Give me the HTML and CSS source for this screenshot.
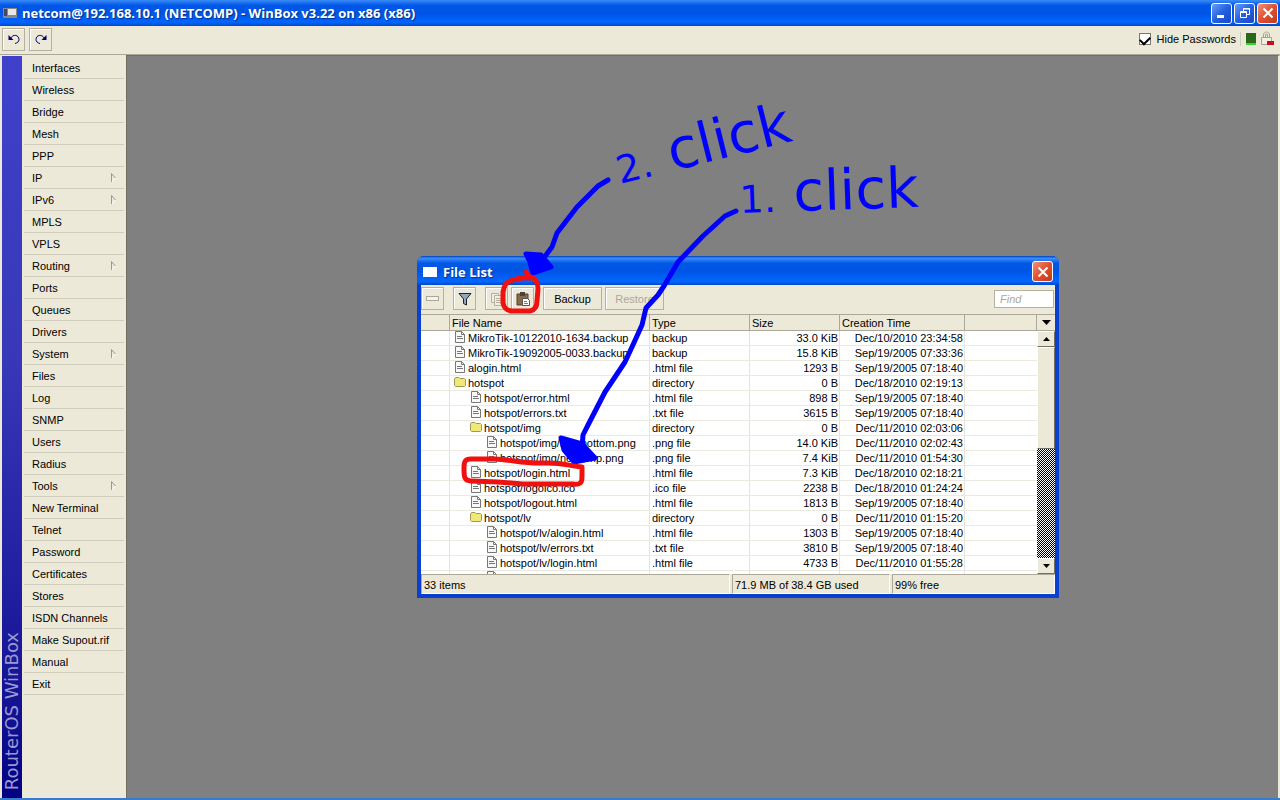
FILE: index.html
```html
<!DOCTYPE html>
<html lang="en">

<head>
    <meta charset="utf-8">
    <title>netcom@192.168.10.1 (NETCOMP) - WinBox v3.22 on x86 (x86)</title>
    <link rel="stylesheet" href="styles.css">
</head>

<body>
    <!-- shared icons -->
    <svg class="defs" width="0" height="0">
        <symbol id="file" viewBox="0 0 12 12">
            <path d="M1.5 .5h6l3 3v8h-9z" fill="#f8f8f8" stroke="#777" />
            <path d="M7.500 .5v3h3" fill="none" stroke="#777" />
            <path d="M3 5.500h5M3 7.500h6" stroke="#777" />
        </symbol>
        <symbol id="folder" viewBox="0 0 12 12">
            <path d="M.5 3l1-1.500h3.500l1 1h4.500l1 1v6l-1 1h-9l-1-1z" fill="#f0e878" stroke="#a09a50" />
        </symbol>
        <symbol id="cross" viewBox="0 0 12 12">
            <path d="M1.500 1.500l9 9M10.500 1.500l-9 9" stroke="#fff" stroke-width="2" />
        </symbol>
        <symbol id="sub" viewBox="0 0 8 10">
            <path d="M1.500 9.500v-9" stroke="#999" fill="none" />
            <path d="M1.500 .5l4 4.500" stroke="#999" fill="none" />
            <path d="M5.500 5l-4 4.500" stroke="#fff" fill="none" />
        </symbol>
    </svg>

    <header class="titlebar">
        <svg width="14" height="10" viewBox="0 0 14 10">
            <rect width="14" height="10" fill="#888" />
            <rect x="1" y="1" width="3" height="7" fill="#446" />
            <rect x="5" y="1" width="8" height="6" fill="#e8e8e8" />
        </svg>
        <h1>netcom@192.168.10.1 (NETCOMP) - WinBox v3.22 on x86 (x86)</h1>
        <button class="win-btn" aria-label="Minimize"><svg width="12" height="12"><rect x="1" y="8" width="7" height="3" fill="#fff" /></svg></button>
        <button class="win-btn" aria-label="Restore"><svg width="12" height="12" fill="none" stroke="#fff"><path d="M4.500 4V1.500h6v6H8M4 2h7" /><path d="M1.500 4.500h6v6h-6zM1 5.500h7" /></svg></button>
        <button class="win-btn close" aria-label="Close"><svg width="12" height="12"><use href="#cross" /></svg></button>
    </header>

    <div class="toolbar">
        <button class="tool" aria-label="Undo"><svg width="12" height="10" fill="none" stroke="#000070"><path d="M2.500 4.500C5-.5 11 1 11 5.500c0 2-1.500 3.500-4 4" /><path d="M.5 1v5h5z" fill="#000070" stroke="none" /></svg></button>
        <button class="tool" aria-label="Redo"><svg width="12" height="10" fill="none" stroke="#000070"><path d="M9.500 4.500C7-.5 1 1 1 5.500c0 2 1.500 3.500 4 4" /><path d="M11.500 1v5h-5z" fill="#000070" stroke="none" /></svg></button>
        <label class="hide-pass"><input type="checkbox" checked> Hide Passwords</label>
        <span class="load"></span>
        <svg width="14" height="16" viewBox="0 0 14 16" fill="none" stroke="#aaa093">
            <path d="M3.500 7V4C3.500 0 9.500 0 9.500 4v3" />
            <path d="M5.500 7V4c0-1.500 2-1.500 2 0v3" />
            <path d="M1.500 6.500h10v7h-10z" fill="#f2efe2" />
            <rect x="7" y="10" width="7" height="4" fill="#c8101c" stroke="none" />
        </svg>
    </div>

    <main>
        <div class="brand"><span>RouterOS WinBox</span></div>
        <nav>
            <a href="#">Interfaces</a>
            <a href="#">Wireless</a>
            <a href="#">Bridge</a>
            <a href="#">Mesh</a>
            <a href="#">PPP</a>
            <a href="#">IP <svg><use href="#sub" /></svg></a>
            <a href="#">IPv6 <svg><use href="#sub" /></svg></a>
            <a href="#">MPLS</a>
            <a href="#">VPLS</a>
            <a href="#">Routing <svg><use href="#sub" /></svg></a>
            <a href="#">Ports</a>
            <a href="#">Queues</a>
            <a href="#">Drivers</a>
            <a href="#">System <svg><use href="#sub" /></svg></a>
            <a href="#">Files</a>
            <a href="#">Log</a>
            <a href="#">SNMP</a>
            <a href="#">Users</a>
            <a href="#">Radius</a>
            <a href="#">Tools <svg><use href="#sub" /></svg></a>
            <a href="#">New Terminal</a>
            <a href="#">Telnet</a>
            <a href="#">Password</a>
            <a href="#">Certificates</a>
            <a href="#">Stores</a>
            <a href="#">ISDN Channels</a>
            <a href="#">Make Supout.rif</a>
            <a href="#">Manual</a>
            <a href="#">Exit</a>
        </nav>

        <div class="desktop">
            <section class="window">
                <div class="window-title">
                    <span class="window-icon"></span>
                    <h2>File List</h2>
                    <button class="win-btn close" aria-label="Close"><svg width="12" height="12"><use href="#cross" /></svg></button>
                </div>
                <div class="window-tools">
                    <button class="tool" aria-label="Remove" disabled><svg width="13" height="5"><rect x=".5" y=".5" width="12" height="4" fill="#f6f4ea" stroke="#aca899" /></svg></button>
                    <button class="tool" aria-label="Filter"><svg width="14" height="14"><path d="M1 1.500h12L8.500 7v6l-3-1.500V7z" fill="#8fa6bd" stroke="#222" /></svg></button>
                    <div class="pair">
                        <button class="tool" aria-label="Copy" disabled><svg width="14" height="14" fill="#f0eee2" stroke="#b5b1a2"><path d="M1.500 1.500h7v9h-7z" /><path d="M4.500 3.500h8v10h-8zM6 6.500h5M6 8.500h5M6 10.500h5" /></svg></button>
                        <button class="tool" aria-label="Paste"><svg width="14" height="14"><path d="M1 2h11v11H1z" fill="#8a6a48" stroke="#54402c" /><rect x="4" y="0" width="5" height="4" fill="#4c4238" /><path d="M6.500 6.500h5l2 2v5h-7z" fill="#fff" stroke="#555" /><path d="M8 9.500h3M8 11.500h4" stroke="#777" /></svg></button>
                    </div>
                    <div class="pair">
                        <button class="text-btn">Backup</button>
                        <button class="text-btn" disabled>Restore</button>
                    </div>
                    <input class="find" type="text" placeholder="Find" aria-label="Find">
                </div>

                <div class="list">
                    <div class="rows">
                        <table>
                            <colgroup>
                                <col class="c-mark">
                                <col class="c-name">
                                <col class="c-type">
                                <col class="c-size">
                                <col class="c-time">
                                <col>
                            </colgroup>
                            <thead>
                                <tr><th></th><th>File Name</th><th>Type</th><th>Size</th><th>Creation Time</th><th></th></tr>
                            </thead>
                            <tbody>
                                <tr><td></td><td><svg><use href="#file" /></svg>MikroTik-10122010-1634.backup</td><td>backup</td><td>33.0 KiB</td><td>Dec/10/2010 23:34:58</td><td></td></tr>
                                <tr><td></td><td><svg><use href="#file" /></svg>MikroTik-19092005-0033.backup</td><td>backup</td><td>15.8 KiB</td><td>Sep/19/2005 07:33:36</td><td></td></tr>
                                <tr><td></td><td><svg><use href="#file" /></svg>alogin.html</td><td>.html file</td><td>1293 B</td><td>Sep/19/2005 07:18:40</td><td></td></tr>
                                <tr><td></td><td><svg><use href="#folder" /></svg>hotspot</td><td>directory</td><td>0 B</td><td>Dec/18/2010 02:19:13</td><td></td></tr>
                                <tr class="in1"><td></td><td><svg><use href="#file" /></svg>hotspot/error.html</td><td>.html file</td><td>898 B</td><td>Sep/19/2005 07:18:40</td><td></td></tr>
                                <tr class="in1"><td></td><td><svg><use href="#file" /></svg>hotspot/errors.txt</td><td>.txt file</td><td>3615 B</td><td>Sep/19/2005 07:18:40</td><td></td></tr>
                                <tr class="in1"><td></td><td><svg><use href="#folder" /></svg>hotspot/img</td><td>directory</td><td>0 B</td><td>Dec/11/2010 02:03:06</td><td></td></tr>
                                <tr class="in2"><td></td><td><svg><use href="#file" /></svg>hotspot/img/logobottom.png</td><td>.png file</td><td>14.0 KiB</td><td>Dec/11/2010 02:02:43</td><td></td></tr>
                                <tr class="in2"><td></td><td><svg><use href="#file" /></svg>hotspot/img/netcomp.png</td><td>.png file</td><td>7.4 KiB</td><td>Dec/11/2010 01:54:30</td><td></td></tr>
                                <tr class="in1"><td></td><td><svg><use href="#file" /></svg>hotspot/login.html</td><td>.html file</td><td>7.3 KiB</td><td>Dec/18/2010 02:18:21</td><td></td></tr>
                                <tr class="in1"><td></td><td><svg><use href="#file" /></svg>hotspot/logoico.ico</td><td>.ico file</td><td>2238 B</td><td>Dec/18/2010 01:24:24</td><td></td></tr>
                                <tr class="in1"><td></td><td><svg><use href="#file" /></svg>hotspot/logout.html</td><td>.html file</td><td>1813 B</td><td>Sep/19/2005 07:18:40</td><td></td></tr>
                                <tr class="in1"><td></td><td><svg><use href="#folder" /></svg>hotspot/lv</td><td>directory</td><td>0 B</td><td>Dec/11/2010 01:15:20</td><td></td></tr>
                                <tr class="in2"><td></td><td><svg><use href="#file" /></svg>hotspot/lv/alogin.html</td><td>.html file</td><td>1303 B</td><td>Sep/19/2005 07:18:40</td><td></td></tr>
                                <tr class="in2"><td></td><td><svg><use href="#file" /></svg>hotspot/lv/errors.txt</td><td>.txt file</td><td>3810 B</td><td>Sep/19/2005 07:18:40</td><td></td></tr>
                                <tr class="in2"><td></td><td><svg><use href="#file" /></svg>hotspot/lv/login.html</td><td>.html file</td><td>4733 B</td><td>Dec/11/2010 01:55:28</td><td></td></tr>
                                <tr class="in2"><td></td><td><svg><use href="#file" /></svg>hotspot/lv/logout.html</td><td>.html file</td><td>2.7 KiB</td><td>Dec/11/2010 01:17:28</td><td></td></tr>
                            </tbody>
                        </table>
                    </div>
                    <div class="scroll">
                        <button class="columns" aria-label="Columns"><svg width="9" height="5"><path d="M0 0h9L4.500 5z" /></svg></button>
                        <button class="arrow" aria-label="Scroll up"><svg width="7" height="4"><path d="M0 4h7L3.500 0z" /></svg></button>
                        <div class="track"><div class="thumb"></div></div>
                        <button class="arrow" aria-label="Scroll down"><svg width="7" height="4"><path d="M0 0h7L3.500 4z" /></svg></button>
                    </div>
                </div>

                <footer class="status">
                    <span class="items">33 items</span>
                    <span class="used">71.9 MB of 38.4 GB used</span>
                    <span class="free">99% free</span>
                </footer>
            </section>

            <!-- notes over the desktop -->
            <svg class="notes" width="500" height="400" viewBox="450 100 500 400">
                <g class="blue">
                    <text transform="translate(620 184) rotate(-14)"><tspan class="num">2.</tspan> click</text>
                    <text transform="translate(740 213) rotate(-2)"><tspan class="num">1.</tspan> click</text>
                    <path d="M608 180l-10 6-21 21-20 26-5 14-9 12" />
                    <path class="head" d="M526 254l15 1 10 12-18 6-3-11z" />
                    <path d="M736 211l-11 5-22 20-25 26-14 24-6 9-12 13-4 17-10 22-7 15-20 30-17 33-5 10-1 14" />
                    <path class="head" d="M561 438l21 6 13 14-21 4-10-12z" />
                </g>
                <g class="red">
                    <path d="M526 272l4 6c-8-1-15 1-20 3-5 2-6 6-7 11v11c1 5 3 7 8 8h19c5-1 7-5 7-10l1-12c0-6-2-10-7-12" />
                    <path d="M582 467c-12-1-22-5-37-4-20 1-32-3-50-4l-24 0c-7 0-7 4-7 10 0 7 0 12 7 12l27 1 25 2h50c7 1 9-1 9-7z" />
                </g>
            </svg>
        </div>
    </main>
</body>

</html>
```
FILE: styles.css
```css
*{
    box-sizing: border-box;
}
body{
    margin: 0;
    min-height: 100vh;
    display: flex;
    flex-direction: column;
    background-color: #ece9d8;
    border-bottom: 2px solid #3a7bd0;
    font-family: "Liberation Sans", sans-serif;
    font-size: 11px;
    line-height: 14px;
    color: black;
}
button,input{
    font: inherit;
    color: inherit;
    margin: 0;
    padding: 0;
}
.defs{
    position: absolute;
}
h1,h2{
    margin: 0;
    flex: 1;
    font-family: "Open Sans", sans-serif;
    font-size: 13px;
    font-weight: bold;
    color: white;
    text-shadow: 1px 1px 1px #003090;
}

/* main title bar and toolbar */
.titlebar{
    height: 26px;
    display: flex;
    align-items: center;
    gap: 2px;
    padding: 0 2px 0 3px;
    background: linear-gradient(#3c8cf8, #0058e8 20%, #0054e3 50%, #0066ff 85%, #0048c8);
}
.titlebar h1{
    padding-left: 3px;
}
.win-btn{
    width: 21px;
    height: 21px;
    display: flex;
    align-items: center;
    justify-content: center;
    border: 1px solid white;
    border-radius: 3px;
    background: linear-gradient(135deg, #6a9cf8, #2460e0 50%, #1848c8);
}
.win-btn.close{
    background: linear-gradient(135deg, #f09078, #e05030 50%, #c03c18);
}
.toolbar{
    height: 29px;
    display: flex;
    align-items: center;
    gap: 4px;
    padding: 0 6px 2px 2px;
    border-bottom: 1px solid #aca899;
}
.tool{
    width: 23px;
    height: 23px;
    display: flex;
    align-items: center;
    justify-content: center;
    border: 1px solid #b5b1a0;
    background-color: #ece9d8;
    box-shadow: inset 1px 1px white;
}
.hide-pass{
    margin-left: auto;
    display: flex;
    align-items: center;
    gap: 6px;
    padding-right: 4px;
    border-right: 1px solid #d0cdbc;
}
.hide-pass input{
    appearance: none;
    width: 12px;
    height: 12px;
    border: 1px solid #777;
    background-color: white;
    display: grid;
    place-items: center;
}
.hide-pass input:checked::before{
    content: "";
    width: 8px;
    height: 5px;
    border-left: 2px solid black;
    border-bottom: 2px solid black;
    transform: rotate(-45deg);
}
.load{
    width: 10px;
    height: 12px;
    margin-left: 1px;
    background-color: #286818;
    border-bottom: 2px solid #30d830;
}

/* side menu */
main{
    flex: 1;
    display: flex;
}
.brand{
    width: 20px;
    margin: 1px 0 0 2px;
    display: flex;
    align-items: flex-end;
    justify-content: center;
    padding-bottom: 8px;
    background: linear-gradient(#4040cc, #3838b8 40%, #101090 90%, #000080);
}
.brand span{
    writing-mode: vertical-rl;
    transform: rotate(180deg);
    font-family: "DejaVu Sans", sans-serif;
    font-size: 18px;
    line-height: 20px;
    color: #9a9ad0;
}
nav{
    width: 104px;
    padding: 2px 2px 0;
}
nav a{
    height: 22px;
    display: flex;
    align-items: center;
    justify-content: space-between;
    padding: 0 6px 0 8px;
    border-bottom: 1px solid #d0cdbc;
    color: black;
    text-decoration: none;
    white-space: nowrap;
}
nav svg{
    width: 8px;
    height: 10px;
}

/* desktop and the file window */
.desktop{
    flex: 1;
    position: relative;
    border: 1px solid #716f64;
    border-right: 2px solid #ece9d8;
    border-bottom: none;
    background-color: #808080;
}
.window{
    position: absolute;
    left: 290px;
    top: 200px;
    width: 642px;
    padding: 0 4px 4px;
    border-radius: 7px 7px 0 0;
    background-color: #0a40d0;
}
.window-title{
    height: 29px;
    margin: 0 -4px;
    display: flex;
    align-items: center;
    gap: 6px;
    padding: 2px 6px 0;
    border-radius: 7px 7px 0 0;
    background: linear-gradient(#0040c0, #3c8cf8 8%, #0058e8 25%, #0054e3 50%, #0066ff 88%, #0048c8);
}
.window-icon{
    width: 14px;
    height: 10px;
    background-color: white;
}
.window-tools{
    height: 29px;
    display: flex;
    align-items: center;
    gap: 9px;
    padding: 0 1px 2px 0;
    background-color: #ece9d8;
}
.pair{
    display: flex;
    gap: 3px;
}
.text-btn{
    width: 59px;
    height: 23px;
    border: 1px solid #b5b1a0;
    background-color: #ece9d8;
    box-shadow: inset 1px 1px white;
}
.text-btn:disabled{
    color: #aca899;
}
.find{
    width: 60px;
    height: 18px;
    margin-left: auto;
    padding: 0 5px;
    border: 1px solid #b5b1a0;
    background-color: white;
}
.find::placeholder{
    color: #aca899;
    font-style: italic;
}
.list{
    height: 260px;
    display: flex;
    background-color: white;
}
.rows{
    flex: 1;
    overflow: hidden;
}
table{
    width: 100%;
    table-layout: fixed;
    border-collapse: separate;
    border-spacing: 0;
}
.c-mark{
    width: 29px;
}
.c-name{
    width: 200px;
}
.c-type{
    width: 100px;
}
.c-size{
    width: 90px;
}
.c-time{
    width: 125px;
}
th,td{
    padding: 0 2px;
    font-weight: normal;
    text-align: left;
    white-space: nowrap;
}
th{
    height: 17px;
    border-right: 1px solid #aca899;
    border-bottom: 1px solid #aca899;
    border-top: 1px solid #aca899;
    background-color: #ece9d8;
}
td{
    height: 15px;
    border-right: 1px solid #e4e4dc;
    border-bottom: 1px solid #ece9e0;
}
td:last-child{
    border-right: none;
}
td:nth-child(4),td:nth-child(5){
    text-align: right;
    padding-right: 1px;
}
td svg{
    width: 12px;
    height: 12px;
    margin: 0 2px;
    vertical-align: top;
}
.in1 td:nth-child(2){
    padding-left: 18px;
}
.in2 td:nth-child(2){
    padding-left: 34px;
}
.scroll{
    width: 18px;
    display: flex;
    flex-direction: column;
}
.scroll button{
    display: flex;
    align-items: center;
    justify-content: center;
    background-color: #ece9d8;
}
.scroll .columns{
    height: 17px;
    border: 1px solid #aca899;
    border-width: 1px 0;
}
.scroll .arrow{
    height: 16px;
    border: 1px solid;
    border-color: white #716f64 #716f64 white;
}
.track{
    flex: 1;
    background: repeating-conic-gradient(black 0 25%, white 0 50%) 0 0 / 2px 2px;
}
.thumb{
    height: 102px;
    border: 1px solid;
    border-color: white #716f64 #716f64 white;
    background-color: #ece9d8;
}
.status{
    height: 20px;
    display: flex;
    gap: 2px;
    background-color: #ece9d8;
}
.status span{
    padding: 3px 2px;
    border: 1px solid;
    border-color: #aca899 white white #aca899;
}
.items{
    flex: 1;
}
.used{
    width: 158px;
}
.free{
    width: 163px;
}

/* notes */
.notes{
    position: absolute;
    left: 323px;
    top: 44px;
    fill: none;
    stroke-width: 5;
    stroke-linecap: round;
    stroke-linejoin: round;
    pointer-events: none;
}
.blue{
    stroke: #0000ff;
}
.blue .head{
    fill: #0000ff;
}
.blue text{
    font-family: "DejaVu Sans", sans-serif;
    font-size: 56px;
    fill: #0000ff;
    stroke: none;
}
.blue .num{
    font-size: 38px;
}
.red{
    stroke: #f01010;
}
```
